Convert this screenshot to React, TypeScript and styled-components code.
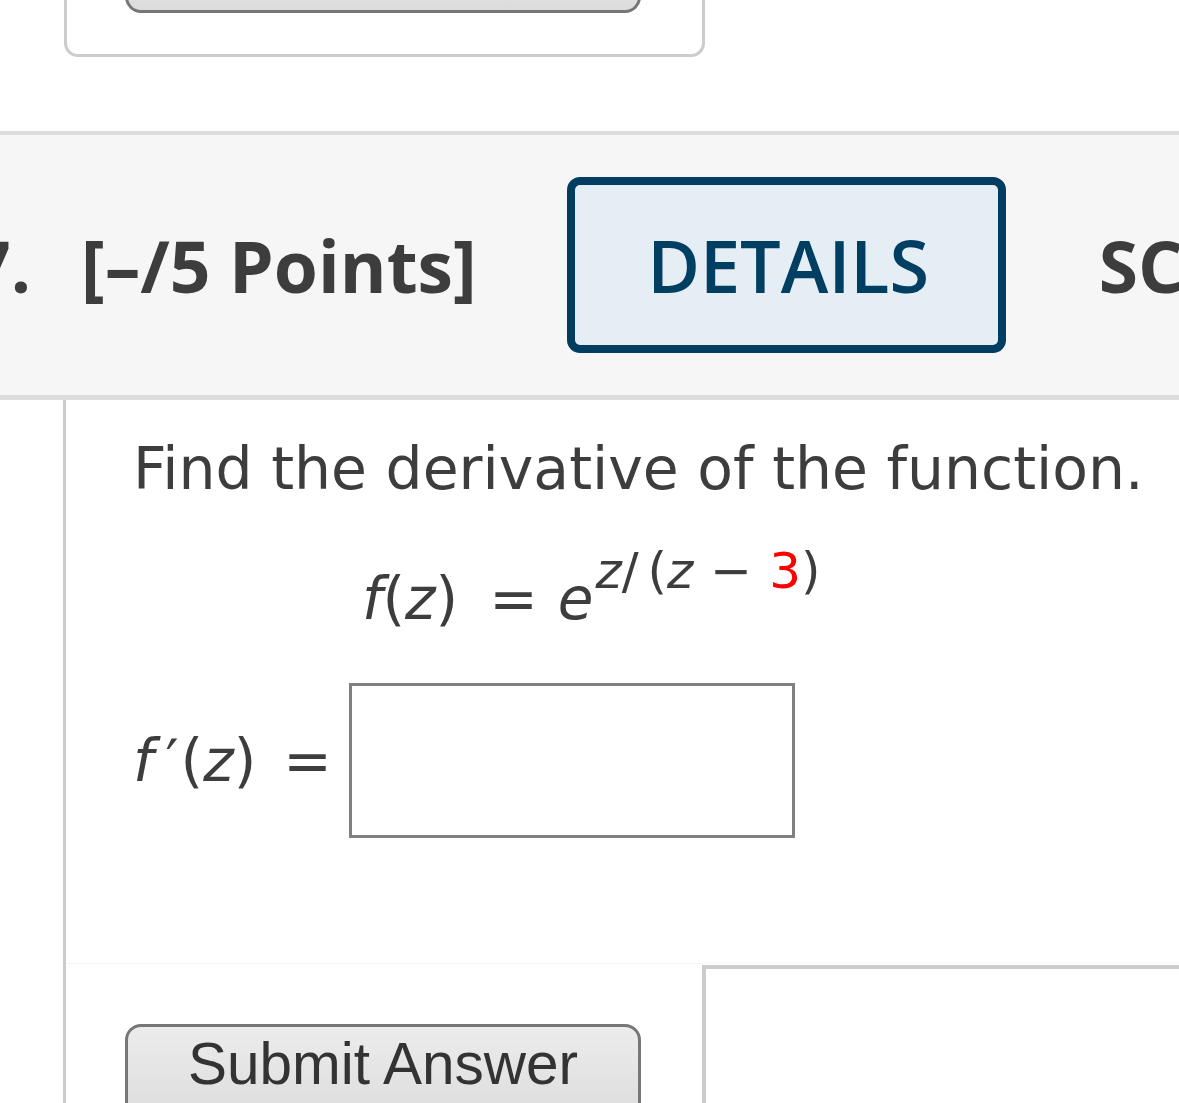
import React from "react";
import styled, { createGlobalStyle } from "styled-components";

const Global = createGlobalStyle`
  html, body { margin: 0; padding: 0; background: #fff; }
  body { width: 1179px; height: 1103px; overflow: hidden; }
  #root { width: 1179px; }
`;

const Page = styled.div`
  width: 1179px;
  display: flex;
  flex-direction: column;
`;

const TopCard = styled.div`
  margin: -63px 0 0 64px;
  width: 641px;
  height: 120px;
  box-sizing: border-box;
  border: 3px solid #cccccc;
  border-radius: 14px;
  display: flex;
  flex-direction: column;
  justify-content: flex-end;
  padding: 0 0 41px 58px;
  flex-shrink: 0;
`;

const GrayButton = styled.button<{ $h: number }>`
  width: 516px;
  height: ${(p) => p.$h}px;
  box-sizing: border-box;
  border: 3px solid #777777;
  border-radius: 16px;
  background: linear-gradient(#ececec, #dcdcdc);
  font-family: "Liberation Sans", Arial, sans-serif;
  font-size: 58.5px;
  color: #333333;
  padding: 0;
  display: flex;
  align-items: flex-start;
  justify-content: center;
  line-height: 1;
  flex-shrink: 0;
`;

const Header = styled.div`
  margin-top: 74px;
  height: 260px;
  flex-shrink: 0;
  border-top: 4px solid #dddddd;
  border-bottom: 5px solid #dddddd;
  background: #f6f6f6;
  display: flex;
  align-items: center;
  font-family: "Open Sans", sans-serif;
  font-weight: 700;
  font-size: 71.3px;
  color: #3d3d3d;
  white-space: nowrap;
  overflow: hidden;
`;

const QNum = styled.span`
  margin-left: -30px;
  flex-shrink: 0;
`;

const Points = styled.span`
  margin-left: 50px;
  flex-shrink: 0;
`;

const Details = styled.div`
  margin-left: 90px;
  width: 439px;
  height: 176px;
  flex-shrink: 0;
  box-sizing: border-box;
  border: 8px solid #003d60;
  border-radius: 13px;
  background: #e6eef5;
  color: #003e62;
  font-weight: 600;
  font-size: 72px;
  display: flex;
  align-items: center;
  justify-content: center;
  padding-left: 4px;
`;

const Score = styled.span`
  margin-left: 93px;
  flex-shrink: 0;
`;

const Body = styled.div`
  margin-left: 63px;
  border-left: 3px solid #cccccc;
  display: flex;
  flex-direction: column;
`;

const Question = styled.div`
  padding: 40px 0 0 67px;
  height: 523px;
  box-sizing: content-box;
  font-family: "DejaVu Sans", Verdana, sans-serif;
  color: #3d3d3d;
`;

const Prompt = styled.div`
  font-size: 58.4px;
  line-height: 1;
  white-space: nowrap;
`;

const MathLine = styled.div<{ $indent: number; $top: number }>`
  margin: ${(p) => p.$top}px 0 0 ${(p) => p.$indent}px;
  font-size: 58px;
  line-height: 1;
  display: flex;
  align-items: center;
  white-space: nowrap;
`;

const Var = styled.i`
  font-style: italic;
`;

const Prime = styled.span`
  margin: 0 2px 0 12px;
`;

const Sup = styled.span`
  font-size: 50px;
  position: relative;
  top: -28px;
  margin-left: 2px;
`;

const Slash = styled.span`
  margin-right: 9px;
`;

const Minus = styled.span`
  margin: 0 17px;
`;

const Red = styled.span`
  color: #ff0000;
`;

const Op = styled.span<{ $l: number; $r: number }>`
  margin: 0 ${(p) => p.$r}px 0 ${(p) => p.$l}px;
`;

const AnswerBox = styled.div`
  width: 446px;
  height: 155px;
  box-sizing: border-box;
  border: 3px solid #808080;
  background: #fff;
`;

const Footer = styled.div`
  border-top: 1px solid #f5f5f5;
  display: flex;
  align-items: flex-start;
  padding-left: 59px;
`;

const SubmitWrap = styled.div`
  margin-top: 60px;
`;

const SidePanel = styled.div`
  margin: 1px 0 0 61px;
  flex: 1;
  height: 200px;
  border-top: 4px solid #cccccc;
  border-left: 4px solid #cccccc;
`;

const SubmitLabel = styled.span`
  margin-top: 8px;
`;

export default function App() {
  return (
    <>
      <Global />
      <Page>
        <TopCard>
          <GrayButton $h={70} />
        </TopCard>
        <Header>
          <QNum>7.</QNum>
          <Points>[–/5 Points]</Points>
          <Details>DETAILS</Details>
          <Score>SCORE</Score>
        </Header>
        <Body>
          <Question>
            <Prompt>Find the derivative of the function.</Prompt>
            <MathLine $indent={229} $top={72}>
              <Var>f</Var>(<Var>z</Var>)<Op $l={31} $r={20}>=</Op>
              <Var>e</Var>
              <Sup>
                <Var>z</Var>
                <Slash>/</Slash>(<Var>z</Var>
                <Minus>−</Minus>
                <Red>3</Red>)
              </Sup>
            </MathLine>
            <MathLine $indent={0} $top={55}>
              <Var>f</Var>
              <Prime>′</Prime>(<Var>z</Var>)<Op $l={27} $r={17}>=</Op>
              <AnswerBox />
            </MathLine>
          </Question>
          <Footer>
            <SubmitWrap>
              <GrayButton $h={100}>
                <SubmitLabel>Submit Answer</SubmitLabel>
              </GrayButton>
            </SubmitWrap>
            <SidePanel />
          </Footer>
        </Body>
      </Page>
    </>
  );
}
